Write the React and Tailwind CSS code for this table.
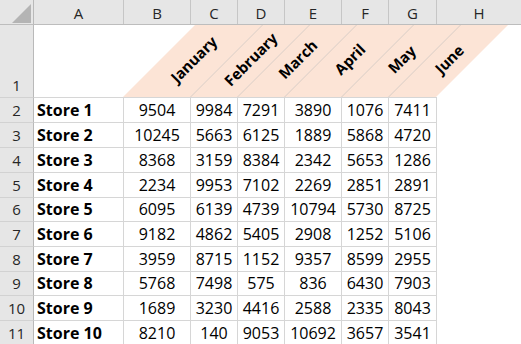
import React from 'react';

const cols = [
  { key: 'A', w: 'w-[90px]' },
  { key: 'B', w: 'w-[67px]' },
  { key: 'C', w: 'w-[47px]' },
  { key: 'D', w: 'w-[47px]' },
  { key: 'E', w: 'w-[57px]' },
  { key: 'F', w: 'w-[47px]' },
  { key: 'G', w: 'w-[48px]' },
];

const months = ['January', 'February', 'March', 'April', 'May', 'June'];

// Excel zoom rounding leaves a few rows one pixel shorter
const rows = [
  { h: 'h-[25px] leading-[24px]', v: ['Store 1', 9504, 9984, 7291, 3890, 1076, 7411] },
  { h: 'h-[25px] leading-[24px]', v: ['Store 2', 10245, 5663, 6125, 1889, 5868, 4720] },
  { h: 'h-[25px] leading-[24px]', v: ['Store 3', 8368, 3159, 8384, 2342, 5653, 1286] },
  { h: 'h-[25px] leading-[24px]', v: ['Store 4', 2234, 9953, 7102, 2269, 2851, 2891] },
  { h: 'h-[24px] leading-[23px]', v: ['Store 5', 6095, 6139, 4739, 10794, 5730, 8725] },
  { h: 'h-[25px] leading-[24px]', v: ['Store 6', 9182, 4862, 5405, 2908, 1252, 5106] },
  { h: 'h-[25px] leading-[24px]', v: ['Store 7', 3959, 8715, 1152, 9357, 8599, 2955] },
  { h: 'h-[24px] leading-[23px]', v: ['Store 8', 5768, 7498, 575, 836, 6430, 7903] },
  { h: 'h-[25px] leading-[24px]', v: ['Store 9', 1689, 3230, 4416, 2588, 2335, 8043] },
  { h: 'h-[25px] leading-[24px]', v: ['Store 10', 8210, 140, 9053, 10692, 3657, 3541] },
];

// column edges along the bottom of row 1, relative to column A's left edge
const edges = [0, 89, 156, 203, 250, 307, 354, 402];
const H = 72;

const DiagonalHeaders = () => (
  <svg className="absolute inset-0" width="487" height="73" viewBox="0 0 487 73">
    {months.map((m, i) => {
      const l = edges[i + 1];
      const r = edges[i + 2];
      return (
        <polygon
          key={m}
          points={`${l},${H} ${r},${H} ${r + H},0 ${l + H},0`}
          fill="#fce4d6"
        />
      );
    })}
    {edges.slice(2, 7).map((b) => (
      <line key={b} x1={b + 0.5} y1={H} x2={b + H + 0.5} y2={0} stroke="#d9cbc2" strokeWidth="1" />
    ))}
    {months.map((m, i) => {
      const cx = (edges[i + 1] + edges[i + 2]) / 2 + H / 2 + 1;
      const cy = H / 2 - 2;
      return (
        <text
          key={m}
          x={cx}
          y={cy}
          transform={`rotate(-45 ${cx} ${cy})`}
          textAnchor="middle"
          dominantBaseline="central"
          fontFamily="'Open Sans', sans-serif"
          fontWeight="700"
          fontSize="15"
          fill="#000"
        >
          {m}
        </text>
      );
    })}
  </svg>
);

const RowHead = ({ n, h }) => (
  <div
    className={`w-[34px] shrink-0 ${h} bg-[#e6e6e6] border-r border-b border-r-[#b9b9b9] border-b-[#d2d2d2] flex items-end justify-center text-[15px] text-[#262626]`}
  >
    {n}
  </div>
);

export default function App() {
  return (
    <div className="w-[521px] h-[344px] overflow-hidden bg-white font-['Open_Sans',sans-serif] text-black">
      {/* column letters */}
      <div className="flex h-[25px] bg-[#e6e6e6] border-b border-[#bdbdbd]">
        <div className="w-[34px] shrink-0 border-r border-[#b9b9b9] relative">
          <div className="absolute right-[2px] bottom-[1px] w-0 h-0 border-l-[19px] border-l-transparent border-b-[19px] border-b-[#b4b4b4]" />
        </div>
        {cols.map((c) => (
          <div
            key={c.key}
            className={`${c.w} shrink-0 border-r border-[#c6c6c6] flex items-center justify-center pt-[2px] text-[15px] text-[#262626]`}
          >
            {c.key}
          </div>
        ))}
        <div className="flex-1 flex items-center justify-center pt-[2px] text-[15px] text-[#262626]">H</div>
      </div>

      {/* row 1: slanted month headers */}
      <div className="flex">
        <RowHead n={1} h="h-[73px] leading-[24px]" />
        <div className="relative flex-1 h-[73px]">
          <div className="w-[403px] h-full border-b border-[#d6d6d6]" />
          <DiagonalHeaders />
        </div>
      </div>

      {/* data rows */}
      {rows.map((r, ri) => (
        <div key={ri} className="flex">
          <RowHead n={ri + 2} h={r.h} />
          {r.v.map((v, ci) => (
            <div
              key={ci}
              className={`${cols[ci].w} shrink-0 ${r.h} border-r border-b border-[#d6d6d6] text-[16px] whitespace-nowrap ${
                ci === 0 ? 'font-bold pl-[3px]' : 'text-center'
              }`}
            >
              {v}
            </div>
          ))}
          <div className="flex-1" />
        </div>
      ))}
    </div>
  );
}
